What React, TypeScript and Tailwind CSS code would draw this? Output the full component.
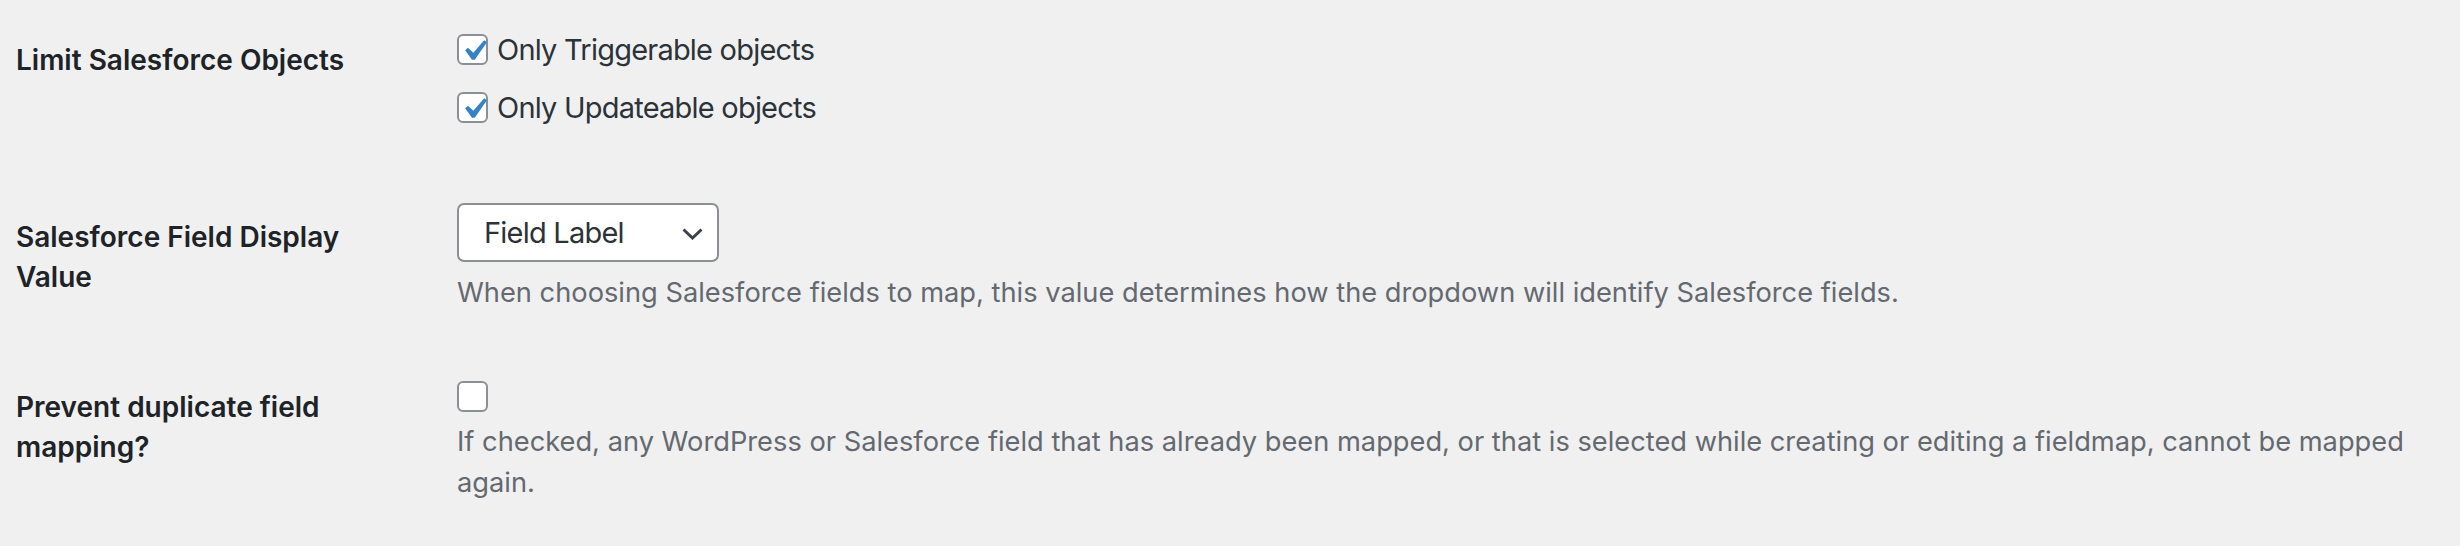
import React from 'react';

const font = { fontFamily: 'Inter, "Noto Sans", sans-serif' };

function Check({ checked }: { checked: boolean }) {
  return (
    <span className="relative inline-block w-[31px] h-[31px] shrink-0 rounded-[6px] border-2 border-[#8c8f94] bg-white">
      {checked && (
        <svg viewBox="0 0 20 20" className="absolute -left-[6px] -top-[6px] w-[42px] h-[42px]">
          <path d="M14.83 4.89l1.34.94-5.81 8.38H9.02L5.78 9.67l1.34-1.25 2.57 2.4z" fill="#3582c4" />
        </svg>
      )}
    </span>
  );
}

function CheckRow({ label }: { label: string }) {
  return (
    <label className="flex items-center h-[31px] gap-[9px] text-[29px] leading-[31px] text-[#2c3338] tracking-[-0.027em]">
      <Check checked />
      <span>{label}</span>
    </label>
  );
}

export default function App() {
  return (
    <div className="w-[2460px] h-[546px] bg-[#f0f0f1] pl-[16px] overflow-hidden" style={font}>
      {/* Limit objects */}
      <div className="flex h-[170px]">
        <div className="w-[441px] pt-[40px] text-[28px] leading-[40px] font-semibold text-[#1d2327]">
          Limit Salesforce Objects
        </div>
        <div className="pt-[34px] flex flex-col gap-[27px]">
          <CheckRow label="Only Triggerable objects" />
          <CheckRow label="Only Updateable objects" />
        </div>
      </div>

      {/* Field display value */}
      <div className="flex h-[180px]">
        <div className="w-[441px] pt-[47px] pr-[80px] text-[28px] leading-[40px] font-semibold text-[#1d2327]">
          Salesforce Field Display Value
        </div>
        <div className="pt-[33px]">
          <div className="flex items-center justify-between w-[262px] h-[59px] rounded-[7px] border-2 border-[#8c8f94] bg-white pl-[25px] pr-[14px] text-[29px] text-[#2c3338] tracking-[-0.027em]">
            <span>Field Label</span>
            <svg viewBox="0 0 21 12" className="w-[21px] h-[12px] mt-[2px]">
              <polyline points="1.5,1.5 10.5,10 19.5,1.5" fill="none" stroke="#3c434a" strokeWidth="3" />
            </svg>
          </div>
          <p className="mt-[10px] text-[27.25px] leading-[41px] text-[#646970]">
            When choosing Salesforce fields to map, this value determines how the dropdown will identify Salesforce fields.
          </p>
        </div>
      </div>

      {/* Prevent duplicate */}
      <div className="flex h-[196px]">
        <div className="w-[441px] pt-[37px] pr-[80px] text-[28px] leading-[40px] font-semibold text-[#1d2327]">
          Prevent duplicate field mapping?
        </div>
        <div className="pt-[31px] w-[1985px]">
          <Check checked={false} />
          <p className="mt-[3px] text-[27.25px] leading-[41px] text-[#646970]">
            If checked, any WordPress or Salesforce field that has already been mapped, or that is selected while creating or editing a fieldmap, cannot be mapped again.
          </p>
        </div>
      </div>
    </div>
  );
}
